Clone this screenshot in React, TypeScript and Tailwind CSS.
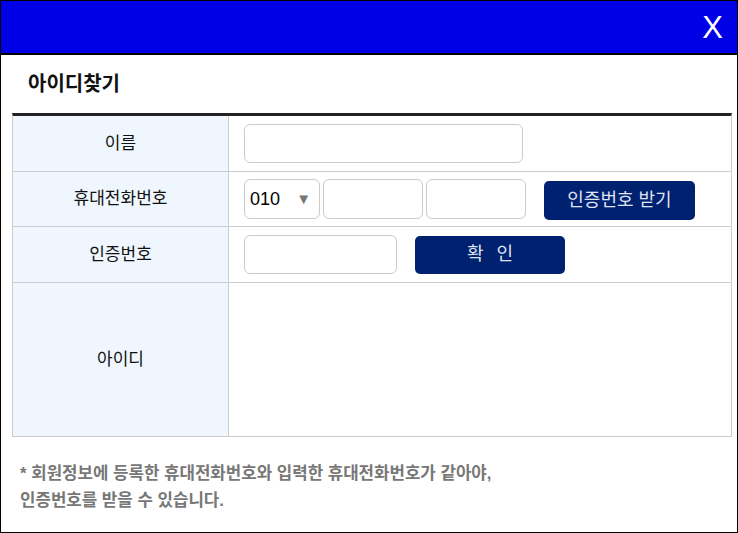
import React from "react";

const font = { fontFamily: '"Liberation Sans", "Noto Sans CJK KR", sans-serif' };

function Row({
  label,
  height,
  children,
}: {
  label: string;
  height: string;
  children?: React.ReactNode;
}) {
  return (
    <div className={`flex border-b border-[#cccccc] ${height}`}>
      <div className="w-[216px] shrink-0 bg-[#eff6fd] border-r border-[#cccccc] flex items-center justify-center text-[17px] text-[#111]">
        {label}
      </div>
      <div className="flex-1 flex items-center pl-[15px]">{children}</div>
    </div>
  );
}

export default function App() {
  return (
    <div
      className="w-[738px] h-[533px] border border-black bg-white flex flex-col"
      style={font}
    >
      <div className="h-[54px] shrink-0 bg-[#0000e6] border-b-2 border-black flex items-center justify-end pr-[14px]">
        <span className="text-white text-[31px] leading-none">X</span>
      </div>

      <div className="h-[58px] shrink-0 flex items-center pl-[27px]">
        <h1 className="text-[20px] font-bold text-[#111]">아이디찾기</h1>
      </div>

      <div className="ml-[11px] mr-[5px] border-t-[3px] border-[#222] border-x border-x-[#cccccc]">
        <Row label="이름" height="h-[56px]">
          <input className="w-[279px] h-[39px] border border-[#cccccc] rounded-[6px] outline-none" />
        </Row>
        <Row label="휴대전화번호" height="h-[55px]">
          <div className="flex items-center">
            <div className="w-[76px] h-[40px] border border-[#cccccc] rounded-[6px] flex items-center justify-between pl-[5px] pr-[8px] text-[18px] text-black">
              <span>010</span>
              <span className="text-[15px] text-[#777]">▼</span>
            </div>
            <input className="ml-[3px] w-[100px] h-[40px] border border-[#cccccc] rounded-[6px] outline-none" />
            <input className="ml-[3px] w-[100px] h-[40px] border border-[#cccccc] rounded-[6px] outline-none" />
            <button className="ml-[18px] w-[151px] h-[39px] mt-[2px] bg-[#002070] rounded-[5px] text-[18px] text-[#dfe3f2]">
              인증번호 받기
            </button>
          </div>
        </Row>
        <Row label="인증번호" height="h-[56px]">
          <div className="flex items-center">
            <input className="w-[153px] h-[39px] border border-[#cccccc] rounded-[6px] outline-none" />
            <button className="ml-[18px] w-[150px] h-[38px] bg-[#002070] rounded-[5px] text-[18px] text-[#dfe3f2] tracking-[4px] pl-[4px]">
              확 인
            </button>
          </div>
        </Row>
        <Row label="아이디" height="h-[154px]" />
      </div>

      <div className="pl-[19px] pt-[23px] text-[16.8px] font-bold text-[#777] leading-[27px]">
        <p>* 회원정보에 등록한 휴대전화번호와 입력한 휴대전화번호가 같아야,</p>
        <p>인증번호를 받을 수 있습니다.</p>
      </div>
    </div>
  );
}
